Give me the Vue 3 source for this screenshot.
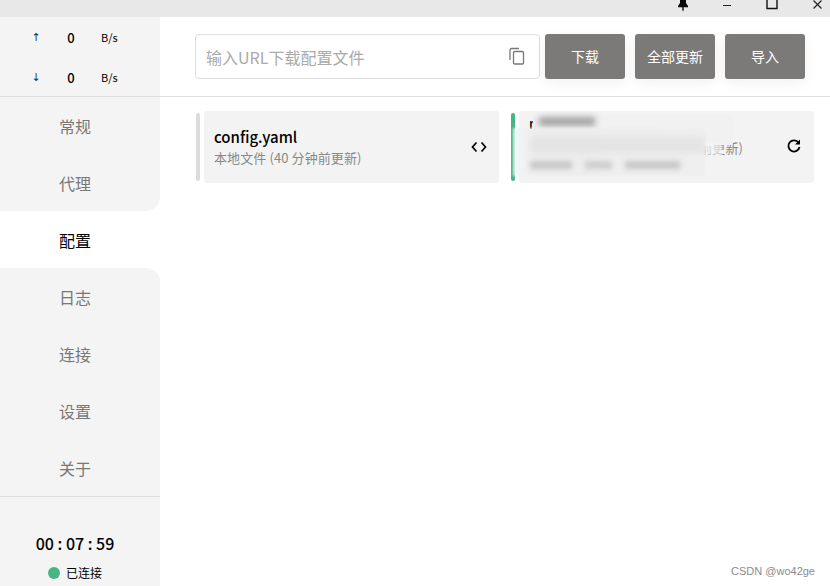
<script setup>
const navItems = [
  { label: '常规', cls: '' },
  { label: '代理', cls: 'before-active' },
  { label: '配置', cls: 'active' },
  { label: '日志', cls: 'after-active' },
  { label: '连接', cls: '' },
  { label: '设置', cls: '' },
  { label: '关于', cls: '' }
]
</script>

<template>
  <div class="window">
    <div class="titlebar">
      <svg class="tb-icon pin" viewBox="0 0 12 17" width="12" height="17">
        <path d="M3 0h6v3l2 3v1.200H6.700v2.800L6 11.500 5.300 10V7.200H1V6l2-3z" fill="#0a0a0a" />
      </svg>
      <svg class="tb-icon min" viewBox="0 0 10 17" width="10" height="17">
        <path d="M1 5.500h8" stroke="#222" stroke-width="1" fill="none" />
      </svg>
      <svg class="tb-icon max" viewBox="0 0 12 17" width="12" height="17">
        <path d="M1 0v9.500h10V0" stroke="#111" stroke-width="1.400" fill="none" />
      </svg>
      <svg class="tb-icon close" viewBox="0 0 12 17" width="12" height="17">
        <path d="M1.500 1.500l8 8M9.500 1.500l-8 8" stroke="#222" stroke-width="1.200" fill="none" />
      </svg>
    </div>

    <div class="body">
      <aside class="sidebar">
        <div class="traffic">
          <div class="traffic-row">
            <span class="arrow">↑</span>
            <span class="value">0</span>
            <span class="unit">B/s</span>
          </div>
          <div class="traffic-row">
            <span class="arrow">↓</span>
            <span class="value">0</span>
            <span class="unit">B/s</span>
          </div>
        </div>

        <nav class="nav">
          <div v-for="item in navItems" :key="item.label" class="nav-item" :class="item.cls">
            {{ item.label }}
          </div>
        </nav>

        <div class="footer">
          <div class="clock">00 : 07 : 59</div>
          <div class="status"><span class="dot"></span>已连接</div>
        </div>
      </aside>

      <main class="main">
        <header class="toolbar">
          <div class="url-input">
            <span class="placeholder">输入URL下载配置文件</span>
            <svg class="copy" viewBox="0 0 18 18" width="18" height="18">
              <path d="M2 13V3a1.500 1.500 0 0 1 1.500-1.500H11" stroke="#777" stroke-width="1.300" fill="none" />
              <rect x="5.500" y="4.500" width="10" height="12.500" rx="1.200" stroke="#777" stroke-width="1.300" fill="none" />
            </svg>
          </div>
          <button class="btn first">下载</button>
          <button class="btn">全部更新</button>
          <button class="btn">导入</button>
        </header>

        <section class="cards">
          <div class="profile">
            <span class="bar"></span>
            <div class="card">
              <div class="card-text">
                <div class="card-title">config.yaml</div>
                <div class="card-sub">本地文件 (40 分钟前更新)</div>
              </div>
              <svg class="card-icon" viewBox="0 0 16 12" width="16" height="12">
                <path d="M5.500 1.500L1.500 6l4 4.500M10.500 1.500l4 4.500-4 4.500" stroke="#000" stroke-width="1.700" fill="none" />
              </svg>
            </div>
          </div>

          <div class="profile">
            <span class="bar on"></span>
            <div class="card">
              <div class="card-text">
                <div class="card-sub tail">(40 分钟前更新)</div>
              </div>
              <svg class="card-icon refresh" viewBox="0 0 16 16" width="16" height="16">
                <path d="M12.600 4.700A5.600 5.600 0 1 0 13.500 9" stroke="#000" stroke-width="1.800" fill="none" />
                <path d="M14 1.500v5H9z" fill="#000" />
              </svg>
              <div class="card-title initial">n</div>
              <div class="smudge s0"></div>
              <div class="smudge s1"></div>
              <div class="smudge s2"></div>
              <div class="smudge s3"></div>
              <div class="smudge s4"></div>
              <div class="smudge b1"></div>
              <div class="smudge b2"></div>
              <div class="smudge b3"></div>
            </div>
          </div>
        </section>
      </main>
    </div>

    <div class="watermark">CSDN @wo42ge</div>
  </div>
</template>

<style>
html, body { margin: 0; padding: 0; background: #fff; overflow: hidden; }
</style>

<style scoped>
.window {
  position: relative;
  width: 830px;
  height: 586px;
  overflow: hidden;
  background: #fff;
  font-family: "Noto Sans CJK SC", "Noto Sans", sans-serif;
}
.titlebar {
  height: 17px;
  background: #e8e8e8;
  display: flex;
  align-items: flex-start;
  justify-content: flex-end;
  overflow: hidden;
}
.tb-icon { display: block; flex: none; }
.pin { margin-right: 33px; }
.min { margin-right: 34px; }
.max { margin-right: 34px; margin-top: -1px; }
.close { margin-right: 6px; margin-top: -1px; }

.body { display: flex; height: 569px; }

.sidebar {
  width: 160px;
  flex: none;
  display: flex;
  flex-direction: column;
  background: #fff;
}
.traffic {
  height: 80px;
  box-sizing: border-box;
  background: #f4f4f4;
  border-bottom: 1px solid #ddd;
}
.traffic-row {
  height: 40px;
  display: flex;
  align-items: center;
  color: #000;
}
.arrow { width: 12px; margin-left: 30px; font-size: 11px; color: #06395a; text-align: center; font-family: "DejaVu Sans", sans-serif; }
.value { width: 12px; margin-left: 23px; font-size: 13px; font-weight: 500; text-align: center; }
.unit { margin-left: 24px; font-size: 11px; }

.nav { display: flex; flex-direction: column; height: 399px; flex: none; background: #fff; }
.nav-item {
  height: 57px;
  flex: none;
  display: flex;
  align-items: center;
  justify-content: center;
  font-size: 16px;
  color: #777;
  padding-right: 10px;
  background: #f4f4f4;
}
.nav-item.active { background: #fff; color: #000; }
.nav-item.before-active { border-bottom-right-radius: 14px; }
.nav-item.after-active { border-top-right-radius: 14px; }

.footer {
  flex: 1;
  background: #f4f4f4;
  border-top: 1px solid #ddd;
  display: flex;
  flex-direction: column;
  align-items: center;
  padding-top: 33px;
  padding-right: 10px;
  box-sizing: border-box;
}
.clock { font-size: 16px; font-weight: 500; color: #000; line-height: 26px; }
.status { display: flex; align-items: center; margin-top: 7px; font-size: 12px; color: #000; line-height: 20px; }
.dot { width: 12px; height: 12px; border-radius: 50%; background: #44b884; margin-right: 6px; }

.main { flex: 1; min-width: 0; }
.toolbar {
  height: 80px;
  box-sizing: border-box;
  border-bottom: 1px solid #ddd;
  padding: 17px 0 0 35px;
  display: flex;
  align-items: flex-start;
}
.url-input {
  width: 345px;
  height: 45px;
  box-sizing: border-box;
  border: 1px solid #ddd;
  border-radius: 4px;
  display: flex;
  align-items: center;
  justify-content: space-between;
  padding: 0 13px 0 10px;
  background: #fff;
}
.placeholder { font-size: 16px; color: #aaa; line-height: 22px; }
.copy { margin-top: -2px; }
.btn {
  width: 80px;
  height: 45px;
  margin-left: 10px;
  border: none;
  border-radius: 3px;
  background: #7c7a78;
  color: #fff;
  font: inherit;
  font-size: 14px;
  padding: 0 0 2px;
  box-shadow: 0 4px 14px rgba(0, 0, 0, 0.06);
}
.btn.first { margin-left: 5px; }

.cards {
  display: flex;
  gap: 12px;
  padding: 14px 0 0 36px;
}
.profile { display: flex; gap: 4px; align-items: center; }
.bar { width: 4px; height: 68px; border-radius: 2px; background: #dcdcdc; }
.bar.on { background: #41b883; }
.card {
  position: relative;
  width: 295px;
  height: 72px;
  box-sizing: border-box;
  background: #f3f3f3;
  border-radius: 3px;
  display: flex;
  align-items: center;
  justify-content: space-between;
  padding: 0 12px 0 10px;
}
.card-title { font-size: 15px; font-weight: 500; color: #000; line-height: 20px; }
.card-sub { font-size: 13px; letter-spacing: 0.1px; color: #888; line-height: 20px; margin-top: 1px; }
.card-title.initial { position: absolute; left: 10px; top: 5px; font-size: 13px; line-height: 16px; }
.card-sub.tail { position: absolute; right: 71px; top: 27px; margin: 0; white-space: nowrap; }
.card-icon { flex: none; }
.refresh { margin-top: -2px; margin-right: 0; }

/* blurred redaction patches lying over the second card */
.smudge { position: absolute; }
.s0 { left: 14px; top: 4px; width: 200px; height: 30px; background: #f1f1f1; filter: blur(0.500px); }
.s1 { left: 20px; top: 6px; width: 56px; height: 9px; background: #a2a2a2; filter: blur(3px); }
.s2 { left: -6px; top: 17px; width: 192px; height: 48px; background: linear-gradient(90deg, rgba(240, 248, 244, 0.85), #ededed 12%, #efefef); filter: blur(0.800px); }
.s3 { left: 11px; top: 26px; width: 175px; height: 16px; background: #e4e4e4; filter: blur(3px); }
.s4 { left: 186px; top: 30px; width: 17px; height: 14px; background: rgba(243, 243, 243, 0.7); filter: blur(1px); }
.b1 { left: 11px; top: 50px; width: 42px; height: 8px; background: #c8c8c8; filter: blur(2.500px); }
.b2 { left: 66px; top: 50px; width: 27px; height: 8px; background: #cecece; filter: blur(2.500px); }
.b3 { left: 106px; top: 50px; width: 55px; height: 8px; background: #c8c8c8; filter: blur(2.500px); }

.watermark {
  position: absolute;
  right: 15px;
  bottom: 9px;
  font-family: "Liberation Sans", sans-serif;
  font-size: 11px;
  color: #8c8c8c;
}
</style>
